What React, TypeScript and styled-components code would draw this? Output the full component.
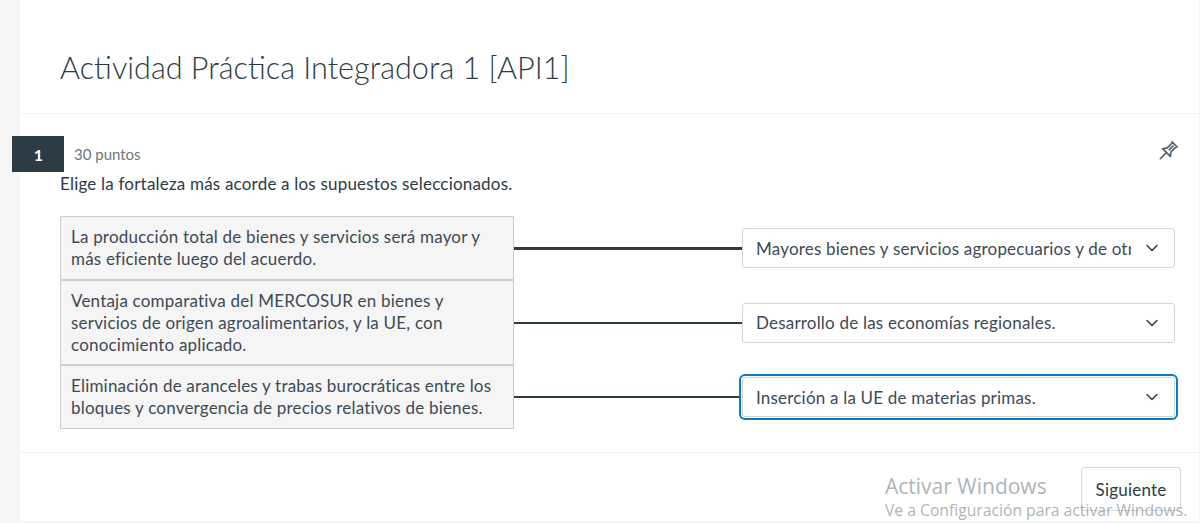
import React from 'react'
import styled, { createGlobalStyle } from 'styled-components'
import { ChevronDown } from 'lucide-react'

const GlobalStyle = createGlobalStyle`
  html, body {
    margin: 0;
    height: 100%;
    overflow: hidden;
    background: #f5f5f5;
    font-family: Lato, "Open Sans", sans-serif;
    color: #2d3b45;
  }
`

const Card = styled.main`
  position: relative;
  box-sizing: border-box;
  height: 521px;
  margin: 0 1px 0 20px;
  background: #fff;
`

const Header = styled.header`
  box-sizing: border-box;
  height: 114px;
  padding: 48px 40px 0;
  border-bottom: 1px solid #f1f1f1;
`

const Title = styled.h1`
  margin: 0;
  font-size: 30.6px;
  line-height: 40px;
  font-weight: 300;
  color: #2d3b45;
`

const Question = styled.section`
  box-sizing: border-box;
  height: 339px;
  padding-top: 22px;
  border-bottom: 1px solid #f3f3f3;
`

const QuestionHead = styled.div`
  display: flex;
  align-items: center;
  height: 36px;
  margin-left: -8px;
  padding-right: 19px;
`

const NumberBadge = styled.div`
  display: flex;
  align-items: center;
  justify-content: center;
  width: 52px;
  height: 36px;
  padding-left: 1px;
  box-sizing: border-box;
  background: #2d3b45;
  color: #fff;
  font-size: 16px;
  font-weight: 700;
`

const Points = styled.span`
  margin-left: 10px;
  font-size: 15px;
  color: #6b7780;
`

const PinIcon = styled.svg`
  display: block;
  width: 24px;
  height: 24px;
  margin: -6px 0 0 auto;
  fill: none;
  stroke: #4f5c66;
  stroke-width: 1.5;
`

const Prompt = styled.p`
  margin: 1px 0 0 40px;
  font-size: 17px;
  letter-spacing: 0.2px;
  line-height: 22px;
  color: #2d3b45;
`

const Matches = styled.div`
  display: flex;
  flex-direction: column;
  margin: 21px 24px 0 40px;
`

const Match = styled.div<{ $height: number }>`
  display: flex;
  align-items: center;
  height: ${({ $height }) => $height}px;
`

const Prompted = styled.div`
  box-sizing: border-box;
  display: flex;
  align-items: center;
  flex: 0 0 454px;
  height: 100%;
  padding: 0 10px;
  background: #f5f5f5;
  border: 1px solid #c9ced2;
  font-size: 17px;
  letter-spacing: 0.2px;
  line-height: 22px;
  color: #3d4a54;
`

const Connector = styled.div<{ $thick?: boolean }>`
  flex: 1;
  height: ${({ $thick }) => ($thick ? 3 : 2)}px;
  background: #2d3b45;
`

const SelectBox = styled.div<{ $focused?: boolean }>`
  box-sizing: border-box;
  display: flex;
  align-items: center;
  flex: 0 0 433px;
  height: 40px;
  padding: 0 12px 0 13px;
  background: #fff;
  border: 1px solid #cfd4d7;
  border-radius: 3px;
  font-size: 17px;
  letter-spacing: 0.2px;
  color: #3d4a54;
  box-shadow: ${({ $focused }) => ($focused ? '0 0 0 1px #fff, 0 0 0 3px #0b7cc0' : 'none')};
`

const SelectText = styled.span`
  flex: 0 0 375px;
  overflow: hidden;
  white-space: nowrap;
`

const Chevron = styled(ChevronDown)`
  margin-left: auto;
  color: #2d3b45;
`

const Footer = styled.footer`
  display: flex;
  justify-content: flex-end;
  padding: 14px 18px 0 0;
`

const NextButton = styled.button`
  box-sizing: border-box;
  width: 100px;
  height: 44px;
  background: #fff;
  border: 1px solid #d5d9dc;
  border-radius: 3px;
  font-family: inherit;
  font-size: 17px;
  letter-spacing: 0.2px;
  color: #2d3b45;
`

const Watermark = styled.div`
  position: absolute;
  left: 865px;
  top: 472px;
  white-space: nowrap;
  color: rgba(120, 130, 136, 0.62);
  font-family: "Open Sans", sans-serif;
  pointer-events: none;
`

const WatermarkTitle = styled.div`
  font-size: 21px;
  line-height: 28px;
`

const WatermarkText = styled.div`
  font-size: 15.7px;
  line-height: 21px;
`

const rows = [
  {
    height: 64,
    thick: true,
    text: 'La producción total de bienes y servicios será mayor y más eficiente luego del acuerdo.',
    answer: 'Mayores bienes y servicios agropecuarios y de otros',
  },
  {
    height: 85,
    text: 'Ventaja comparativa del MERCOSUR en bienes y servicios de origen agroalimentarios, y la UE, con conocimiento aplicado.',
    answer: 'Desarrollo de las economías regionales.',
  },
  {
    height: 64,
    focused: true,
    text: 'Eliminación de aranceles y trabas burocráticas entre los bloques y convergencia de precios relativos de bienes.',
    answer: 'Inserción a la UE de materias primas.',
  },
]

export default function App() {
  return (
    <>
      <GlobalStyle />
      <Card>
        <Header>
          <Title>Actividad Práctica Integradora 1 [API1]</Title>
        </Header>
        <Question>
          <QuestionHead>
            <NumberBadge>1</NumberBadge>
            <Points>30 puntos</Points>
            <PinIcon viewBox="0 0 22 22">
              <g transform="rotate(45 11 11)">
                <path d="M7 2.5h8M8.5 2.5v7L6 13h10l-2.5-3.5v-7" strokeLinejoin="round" />
                <path d="M11 4v6" />
                <path d="M11 13v8" strokeLinecap="round" />
              </g>
            </PinIcon>
          </QuestionHead>
          <Prompt>Elige la fortaleza más acorde a los supuestos seleccionados.</Prompt>
          <Matches>
            {rows.map((row) => (
              <Match key={row.answer} $height={row.height}>
                <Prompted>
                  <span>{row.text}</span>
                </Prompted>
                <Connector $thick={row.thick} />
                <SelectBox $focused={row.focused}>
                  <SelectText>{row.answer}</SelectText>
                  <Chevron size={20} strokeWidth={1.7} />
                </SelectBox>
              </Match>
            ))}
          </Matches>
        </Question>
        <Footer>
          <NextButton>Siguiente</NextButton>
        </Footer>
        <Watermark>
          <WatermarkTitle>Activar Windows</WatermarkTitle>
          <WatermarkText>Ve a Configuración para activar Windows.</WatermarkText>
        </Watermark>
      </Card>
    </>
  )
}
